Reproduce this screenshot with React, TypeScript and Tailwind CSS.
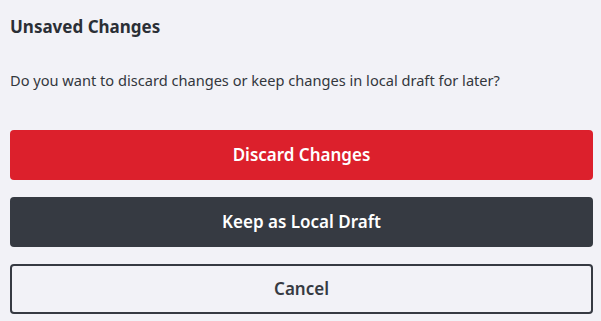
export default function App() {
  return (
    <div
      className="w-[601px] h-[321px] bg-[#f2f2f7] pl-[10px] pr-[8px] pt-[15px] text-[#2b2f36]"
      style={{ fontFamily: '"Noto Sans", sans-serif' }}
    >
      <h1 className="text-[17px] leading-[24px] font-bold">Unsaved Changes</h1>
      <p className="mt-[31px] text-[14.6px] leading-[20px] text-[#33373d]">
        Do you want to discard changes or keep changes in local draft for later?
      </p>
      <div className="mt-[40px] flex flex-col gap-[17px]">
        <button className="h-[50px] rounded-[4px] bg-[#dc202c] text-white text-[17px] font-semibold">
          Discard Changes
        </button>
        <button className="h-[50px] rounded-[4px] bg-[#363a42] text-white text-[17px] font-semibold">
          Keep as Local Draft
        </button>
        <button className="h-[50px] rounded-[4px] border-2 border-[#363a42] bg-transparent text-[#363a42] text-[17px] font-semibold">
          Cancel
        </button>
      </div>
    </div>
  );
}
